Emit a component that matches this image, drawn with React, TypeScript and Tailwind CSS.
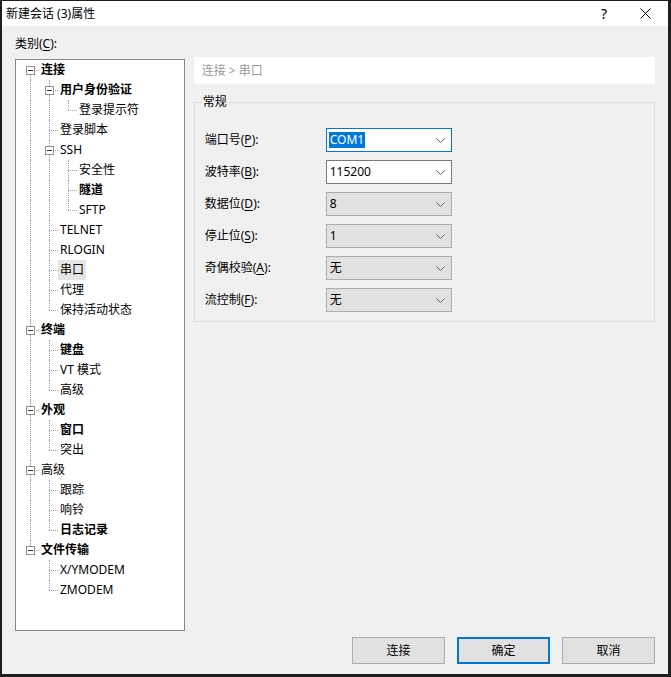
import React from 'react';

/* 会话属性对话框：左侧类别树，右侧串口设置 */

interface Node {
  label: string;
  bold?: boolean;
  selected?: boolean;
  children?: Node[];
}

const TREE: Node[] = [
  {
    label: '连接',
    bold: true,
    children: [
      { label: '用户身份验证', bold: true, children: [{ label: '登录提示符' }] },
      { label: '登录脚本' },
      { label: 'SSH', children: [{ label: '安全性' }, { label: '隧道', bold: true }, { label: 'SFTP' }] },
      { label: 'TELNET' },
      { label: 'RLOGIN' },
      { label: '串口', selected: true },
      { label: '代理' },
      { label: '保持活动状态' },
    ],
  },
  { label: '终端', bold: true, children: [{ label: '键盘', bold: true }, { label: 'VT 模式' }, { label: '高级' }] },
  { label: '外观', bold: true, children: [{ label: '窗口', bold: true }, { label: '突出' }] },
  { label: '高级', children: [{ label: '跟踪' }, { label: '响铃' }, { label: '日志记录', bold: true }] },
  { label: '文件传输', bold: true, children: [{ label: 'X/YMODEM' }, { label: 'ZMODEM' }] },
];

interface Row {
  node: Node;
  level: number;
  hasNext: boolean;
  isFirstRoot: boolean;
  /* 每一层祖先是否还有后续兄弟，决定竖线是否贯穿 */
  trail: boolean[];
}

const flatten = (nodes: Node[], level: number, trail: boolean[], out: Row[]) => {
  nodes.forEach((node, i) => {
    const hasNext = i < nodes.length - 1;
    out.push({ node, level, hasNext, isFirstRoot: level === 0 && i === 0, trail });
    if (node.children) flatten(node.children, level + 1, [...trail, hasNext], out);
  });
  return out;
};

const ROWS = flatten(TREE, 0, [], []);

const TreeRow: React.FC<{ row: Row }> = ({ row }) => {
  const { node, hasNext, isFirstRoot, trail } = row;
  return (
    <div className="flex h-[20px] items-stretch">
      {trail.map((line, k) => (
        <div key={k} className="relative w-[19px] shrink-0">
          {line && <div className="absolute left-[9px] top-0 h-[20px] w-0 border-l border-dotted border-[#a0a0a0]" />}
        </div>
      ))}
      <div className="relative w-[19px] shrink-0">
        {!isFirstRoot && <div className="absolute left-[9px] top-0 h-[10px] w-0 border-l border-dotted border-[#a0a0a0]" />}
        {(hasNext || isFirstRoot) && hasNext && (
          <div className="absolute left-[9px] top-[10px] h-[10px] w-0 border-l border-dotted border-[#a0a0a0]" />
        )}
        <div className="absolute left-[9px] top-[10px] h-0 w-[9px] border-t border-dotted border-[#a0a0a0]" />
        {node.children && (
          <div className="absolute left-[5px] top-[6px] h-[9px] w-[9px] border border-[#919191] bg-white">
            <div className="absolute left-[1px] top-[3px] h-[1px] w-[5px] bg-[#333]" />
          </div>
        )}
      </div>
      <span
        className={`-ml-[1px] self-center whitespace-nowrap px-[2px] text-[12px] leading-[20px] text-black ${
          node.bold ? 'font-bold' : ''
        } ${node.selected ? 'bg-[#e5e5e5]' : ''}`}
      >
        {node.label}
      </span>
    </div>
  );
};

type SelectKind = 'focus' | 'white' | 'gray';

const Chevron = () => (
  <svg width="9" height="5" viewBox="0 0 9 5" className="shrink-0">
    <polyline points="0.5,0.5 4.5,4.5 8.5,0.5" fill="none" stroke="#606060" strokeWidth="1" />
  </svg>
);

const Select: React.FC<{ value: string; kind: SelectKind }> = ({ value, kind }) => {
  const box =
    kind === 'focus'
      ? 'border-[#0078d7] bg-white'
      : kind === 'white'
        ? 'border-[#7a7a7a] bg-white'
        : 'border-[#adadad] bg-[#e1e1e1]';
  return (
    <div className={`flex h-[24px] w-[126px] items-center justify-between border pl-[2px] pr-[6px] ${box}`}>
      <span
        className={`px-[1px] text-[12px] leading-[16px] ${
          kind === 'focus' ? 'bg-[#0078d7] text-white' : 'text-black'
        }`}
      >
        {value}
      </span>
      <Chevron />
    </div>
  );
};

const FIELDS: { label: string; key: string; value: string; kind: SelectKind }[] = [
  { label: '端口号', key: 'P', value: 'COM1', kind: 'focus' },
  { label: '波特率', key: 'B', value: '115200', kind: 'white' },
  { label: '数据位', key: 'D', value: '8', kind: 'gray' },
  { label: '停止位', key: 'S', value: '1', kind: 'gray' },
  { label: '奇偶校验', key: 'A', value: '无', kind: 'gray' },
  { label: '流控制', key: 'F', value: '无', kind: 'gray' },
];

const Button: React.FC<{ label: string; focused?: boolean }> = ({ label, focused }) => (
  <div
    className={`flex h-[27px] w-[93px] items-center justify-center bg-[#e1e1e1] text-[12px] text-black ${
      focused ? 'border-2 border-[#0078d7]' : 'border border-[#adadad]'
    }`}
  >
    {label}
  </div>
);

export default function App() {
  return (
    <div className="h-[677px] w-[671px] bg-[#1f1f1f] pl-[2px] pt-[1px] font-['Noto_Sans','Noto_Sans_CJK_SC',sans-serif]">
      <div className="flex h-[673px] w-[666px] flex-col bg-[#f0f0f0]">
        {/* 标题栏 */}
        <div className="flex h-[25px] shrink-0 items-center bg-white pl-[4px]">
          <span className="text-[12px] text-black">新建会话 (3)属性</span>
          <span className="ml-auto mr-[33px] text-[14px] leading-none text-black">?</span>
          <svg width="11" height="11" viewBox="0 0 11 11" className="mr-[17px]">
            <line x1="0.5" y1="0.5" x2="10.5" y2="10.5" stroke="#000" strokeWidth="1" />
            <line x1="10.5" y1="0.5" x2="0.5" y2="10.5" stroke="#000" strokeWidth="1" />
          </svg>
        </div>

        <div className="flex flex-col pl-[13px] pr-[13px] pt-[10px]">
          <div className="flex">
            {/* 左栏：类别树 */}
            <div className="flex w-[170px] flex-col">
              <div className="h-[16px] text-[12px] leading-[16px] text-black">
                类别(<span className="underline underline-offset-2">C</span>):
              </div>
              <div className="mt-[7px] h-[572px] border border-[#828790] bg-white pl-[5px]">
                {ROWS.map((row, i) => (
                  <TreeRow key={i} row={row} />
                ))}
              </div>
            </div>

            {/* 右栏：串口设置 */}
            <div className="ml-[9px] flex w-[462px] flex-col pt-[21px]">
              <div className="flex h-[27px] items-center bg-white pl-[8px] text-[12px] text-[#999]">
                连接 &gt; 串口
              </div>
              <div className="relative mt-[18px] border border-[#dcdcdc] pb-[9px] pl-[10px] pt-[25px]">
                <span className="absolute -top-[9px] left-[7px] bg-[#f0f0f0] px-[1px] text-[12px] leading-[16px] text-black">
                  常规
                </span>
                <div className="flex flex-col gap-[8px]">
                  {FIELDS.map((f) => (
                    <div key={f.key} className="flex h-[24px] items-center">
                      <span className="w-[121px] text-[12px] text-black">
                        {f.label}(<span className="underline underline-offset-2">{f.key}</span>):
                      </span>
                      <Select value={f.value} kind={f.kind} />
                    </div>
                  ))}
                </div>
              </div>
            </div>
          </div>

          {/* 底部按钮 */}
          <div className="mt-[6px] flex justify-end gap-[12px]">
            <Button label="连接" />
            <Button label="确定" focused />
            <Button label="取消" />
          </div>
        </div>
      </div>
    </div>
  );
}
